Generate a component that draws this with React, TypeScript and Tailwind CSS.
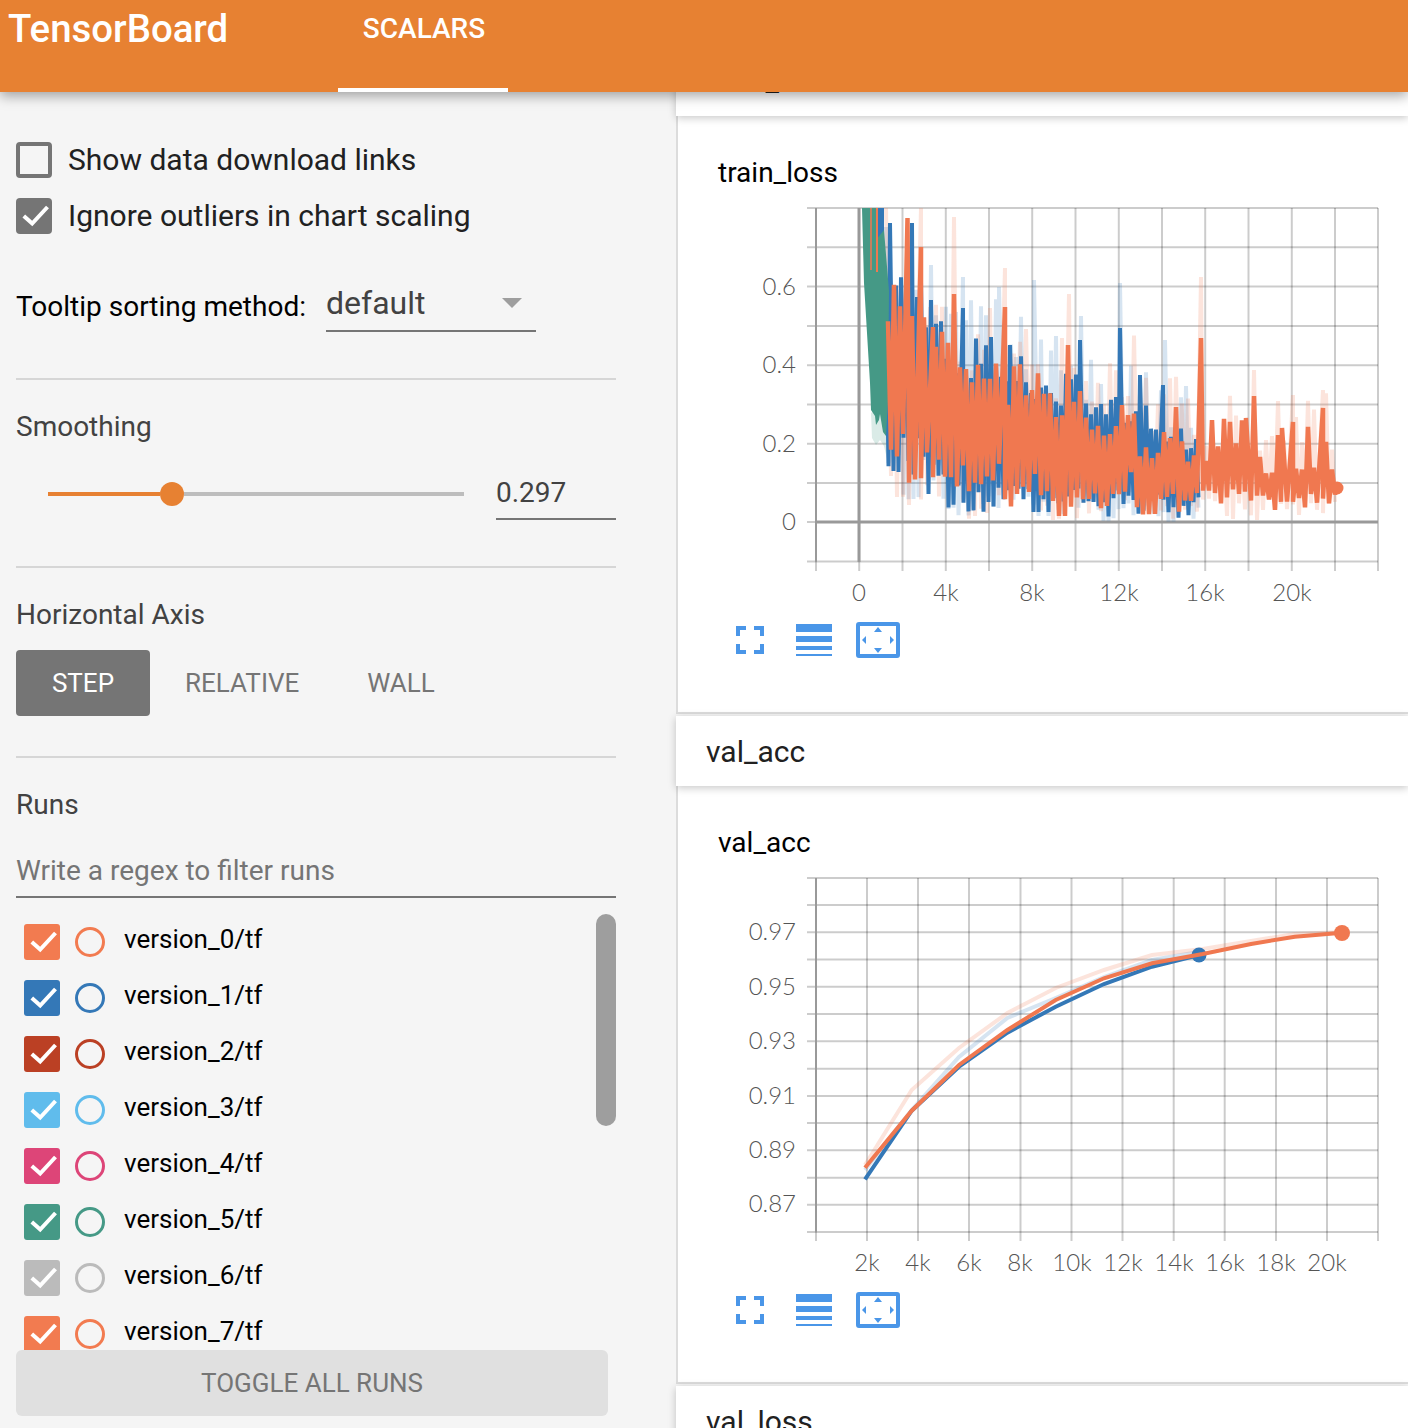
import React from 'react';

type Key = [number, number];
type Pt = [number, number];

const rng = (seed: number) => () => {
  seed |= 0;
  seed = (seed + 0x6d2b79f5) | 0;
  let t = Math.imul(seed ^ (seed >>> 15), 1 | seed);
  t = (t + Math.imul(t ^ (t >>> 7), 61 | t)) ^ t;
  return ((t ^ (t >>> 14)) >>> 0) / 4294967296;
};

const interp = (keys: Key[], x: number) => {
  if (x <= keys[0][0]) return keys[0][1];
  for (let i = 1; i < keys.length; i++) {
    if (x <= keys[i][0]) {
      const [x0, y0] = keys[i - 1];
      const [x1, y1] = keys[i];
      return y0 + ((y1 - y0) * (x - x0)) / (x1 - x0);
    }
  }
  return keys[keys.length - 1][1];
};

interface SpikeCfg {
  seed: number;
  from: number;
  to: number;
  step: number;
  envTop: Key[];
  massTop: Key[];
  massBot: Key[];
  envBot: Key[];
  peaks: Pt[];
  sway: Key[];
}

const spikes = ({ seed, from, to, step, envTop, massTop, massBot, envBot, peaks, sway }: SpikeCfg) => {
  const r = rng(seed);
  // slow wander so the mass moves in bumps rather than a regular comb
  const knots: Key[] = [];
  for (let x = from - 20; x < to + 40; x += 14 + r() * 16) knots.push([x, r() * 2 - 1]);
  const pts: Pt[] = [];
  for (let x = from; x < to; x += step) {
    const s = interp(knots, x) * interp(sway, x);
    const up = interp(massTop, x) + s + (interp(envTop, x) - interp(massTop, x)) * Math.pow(r(), 1.7);
    const down = Math.min(interp(massBot, x) + s * 0.8 + (interp(envBot, x) - interp(massBot, x)) * Math.pow(r(), 1.4), interp(envBot, x));
    pts.push([x, up], [x + step / 2, down]);
  }
  peaks.forEach(([px, py]) => {
    let best = 0;
    let bestD = 1e9;
    for (let i = 0; i < pts.length; i += 2) {
      const d = Math.abs(pts[i][0] - px);
      if (d < bestD) {
        bestD = d;
        best = i;
      }
    }
    pts[best] = [px, py];
  });
  return pts;
};

const toStr = (pts: Pt[]) => pts.map(([x, y]) => `${x.toFixed(1)},${y.toFixed(1)}`).join(' ');

const orangeCfg: SpikeCfg = {
  seed: 17,
  from: 888,
  to: 1334,
  step: 6,
  sway: [[888, 38], [1100, 34], [1200, 12], [1336, 8]],
  envTop: [[888, 240], [900, 330], [930, 335], [960, 340], [1000, 350], [1040, 360], [1080, 370], [1120, 395], [1160, 400], [1200, 415], [1260, 420], [1336, 435]],
  massTop: [[888, 330], [950, 375], [1000, 400], [1050, 410], [1100, 430], [1150, 450], [1200, 470], [1336, 476]],
  massBot: [[888, 450], [950, 465], [1000, 475], [1100, 490], [1200, 495], [1336, 498]],
  envBot: [[888, 470], [900, 512], [950, 512], [1000, 516], [1100, 516], [1200, 512], [1250, 519], [1336, 515]],
  peaks: [[907.5, 218], [921, 247], [933, 327], [954, 294], [1005, 307], [1068, 345], [1201, 338], [1254, 396], [1246, 418], [1282, 428], [1293, 422], [1323, 408], [1212, 420]],
};

const orange = spikes(orangeCfg).concat([[1337, 488]]);
const orangeRaw = spikes({
  ...orangeCfg,
  seed: 91,
  envTop: orangeCfg.envTop.map(([x, y]) => [x, y - 45] as Key),
  massTop: orangeCfg.massTop.map(([x, y]) => [x, y - 25] as Key),
  envBot: orangeCfg.envBot.map(([x, y]) => [x, Math.min(y + 6, 520)] as Key),
  peaks: [[886, 208], [921, 208], [954, 217], [1005, 268], [1069, 294], [1201, 277], [1254, 370], [1323, 390], [1293, 395]],
});
const blueCfg: SpikeCfg = {
  seed: 5,
  from: 886,
  to: 1200,
  step: 5,
  sway: [[886, 25], [1200, 15]],
  envTop: [[886, 230], [930, 305], [960, 320], [1000, 325], [1040, 360], [1080, 370], [1120, 395], [1160, 400], [1200, 440]],
  massTop: [[886, 320], [950, 355], [1000, 375], [1100, 415], [1200, 455]],
  massBot: [[886, 440], [950, 470], [1000, 480], [1100, 495], [1200, 500]],
  envBot: [[886, 480], [899, 503], [940, 511], [1000, 512], [1050, 512], [1100, 517], [1200, 518]],
  peaks: [[890, 223], [912, 223], [917, 297], [931, 300], [963, 308], [1010, 345], [1080, 340], [1120, 328], [1140, 375], [1163, 385]],
};
const blue = spikes(blueCfg);
const blueRaw = spikes({
  ...blueCfg,
  seed: 33,
  envTop: blueCfg.envTop.map(([x, y]) => [x, y - 40] as Key),
  envBot: blueCfg.envBot.map(([x, y]) => [x, y + 4] as Key),
  peaks: [[931, 265], [963, 277], [999, 287], [1034, 280], [1120, 283], [1165, 340]],
});

const GREEN_BODY: Pt[] = [[862, 208], [864, 283], [867, 333], [870, 383], [871, 410], [875, 416], [876, 425], [879, 420], [880, 414], [883, 432], [886, 436], [888, 400], [889, 291], [884, 230], [876, 240], [876, 208]];
const GREEN_RAW: Pt[] = [[871, 413], [872, 438], [876, 445], [880, 440], [884, 446], [888, 463], [888, 400]];

const COLOR_ORANGE = '#f07850';
const COLOR_BLUE = '#3478b7';
const COLOR_GREEN = '#459986';

const lossX = [816, 859.2, 902.5, 945.8, 989, 1032.2, 1075.5, 1118.8, 1162, 1205.2, 1248.5, 1291.8, 1335, 1378];
const lossY = [208, 247.3, 286.6, 326, 365.2, 404.5, 443.8, 483, 522, 561.6];
const accX = [816, 867, 918, 969, 1020.5, 1071.5, 1122.5, 1173.7, 1224.7, 1276, 1327, 1378];
const accY = [878, 905, 932.3, 959.4, 986.7, 1014, 1041.3, 1068.7, 1096, 1123, 1150.3, 1177.7, 1204.8, 1232];

const accOrange: Pt[] = [[865, 1167.7], [911.7, 1110.7], [959, 1065], [1007.4, 1030], [1055.7, 1000], [1104, 978.3], [1152, 963.3], [1202.7, 954], [1251, 944], [1294.8, 936.7], [1342, 932.7]];
const accBlue: Pt[] = [[865, 1179.3], [911.7, 1110.7], [959, 1066.7], [1007.4, 1032.7], [1055.7, 1006.7], [1104, 984], [1152, 966.7], [1199, 955]];
const accOrangeRaw: Pt[] = [[865, 1165], [911.7, 1090], [959, 1048], [1007.4, 1013], [1055.7, 988], [1104, 970], [1152, 955], [1202.7, 949], [1251, 941], [1294.8, 934], [1342, 932]];
const accBlueRaw: Pt[] = [[865, 1170], [911.7, 1110], [959, 1057], [1007.4, 1018], [1055.7, 998], [1104, 977], [1152, 960], [1199, 952]];

const Grid = ({ xs, ys, top, bottom, left, right }: { xs: number[]; ys: number[]; top: number; bottom: number; left: number; right: number }) => (
  <g stroke="#000" strokeOpacity="0.2" strokeWidth="2">
    {xs.map((x) => (
      <line key={x} x1={x} x2={x} y1={top} y2={bottom} />
    ))}
    {ys.map((y) => (
      <line key={y} x1={left} x2={right} y1={y} y2={y} />
    ))}
  </g>
);

const TickLabel = ({ x, y, anchor, children }: { x: number; y: number; anchor: 'end' | 'middle'; children: string }) => (
  <text x={x} y={y} textAnchor={anchor} fontSize="24" fontWeight="300" fill="#555" fontFamily="Lato, sans-serif">
    {children}
  </text>
);

const LossChart = () => (
  <svg viewBox="740 200 668 410" className="block w-[668px] h-[410px] ml-[62px]">
    <Grid xs={lossX} ys={lossY} top={208} bottom={571} left={807} right={1378} />
    <line x1="816" x2="816" y1="208" y2="562" stroke="#999" strokeWidth="2" />
    <line x1="859" x2="859" y1="208" y2="562" stroke="#999" strokeWidth="3" />
    <line x1="816" x2="1378" y1="522" y2="522" stroke="#999" strokeWidth="3" />
    <polyline points={toStr(blueRaw)} fill="none" stroke={COLOR_BLUE} strokeOpacity="0.2" strokeWidth="4" strokeLinejoin="bevel" />
    <polyline points={toStr(orangeRaw)} fill="none" stroke={COLOR_ORANGE} strokeOpacity="0.2" strokeWidth="4" strokeLinejoin="bevel" />
    <polygon points={toStr(GREEN_RAW)} fill={COLOR_GREEN} fillOpacity="0.2" />
    <polyline points={toStr(blue)} fill="none" stroke={COLOR_BLUE} strokeWidth="4" strokeLinejoin="bevel" />
    <line x1="880" x2="880" y1="208" y2="238" stroke={COLOR_BLUE} strokeWidth="8" />
    <polygon points={toStr(GREEN_BODY)} fill={COLOR_GREEN} />
    <line x1="871" x2="871" y1="208" y2="270" stroke={COLOR_ORANGE} strokeWidth="1.5" />
    <line x1="877" x2="877" y1="208" y2="272" stroke={COLOR_ORANGE} strokeWidth="2" />
    <polyline points={toStr(orange)} fill="none" stroke={COLOR_ORANGE} strokeWidth="4.5" strokeLinejoin="bevel" />
    <circle cx="1337" cy="488" r="6.5" fill={COLOR_ORANGE} />
    {[['0.6', 295], ['0.4', 373], ['0.2', 452], ['0', 530]].map(([t, y]) => (
      <TickLabel key={t} x={796} y={y as number} anchor="end">{t as string}</TickLabel>
    ))}
    {[['0', 859], ['4k', 946], ['8k', 1032], ['12k', 1119], ['16k', 1205], ['20k', 1292]].map(([t, x]) => (
      <TickLabel key={t} x={x as number} y={601} anchor="middle">{t as string}</TickLabel>
    ))}
  </svg>
);

const AccChart = () => (
  <svg viewBox="740 870 668 410" className="block w-[668px] h-[410px] ml-[62px]">
    <Grid xs={accX} ys={accY} top={878} bottom={1241} left={807} right={1378} />
    <line x1="816" x2="816" y1="878" y2="1232" stroke="#999" strokeWidth="2" />
    <polyline points={toStr(accBlueRaw)} fill="none" stroke={COLOR_BLUE} strokeOpacity="0.2" strokeWidth="4" />
    <polyline points={toStr(accOrangeRaw)} fill="none" stroke={COLOR_ORANGE} strokeOpacity="0.2" strokeWidth="4" />
    <polyline points={toStr(accBlue)} fill="none" stroke={COLOR_BLUE} strokeWidth="4" />
    <circle cx="1199" cy="955" r="7.5" fill={COLOR_BLUE} />
    <polyline points={toStr(accOrange)} fill="none" stroke={COLOR_ORANGE} strokeWidth="4" />
    <circle cx="1342" cy="933" r="8" fill={COLOR_ORANGE} />
    {[['0.97', 940], ['0.95', 995], ['0.93', 1049], ['0.91', 1104], ['0.89', 1158], ['0.87', 1212]].map(([t, y]) => (
      <TickLabel key={t} x={796} y={y as number} anchor="end">{t as string}</TickLabel>
    ))}
    {[['2k', 867], ['4k', 918], ['6k', 969], ['8k', 1020], ['10k', 1072], ['12k', 1123], ['14k', 1174], ['16k', 1225], ['18k', 1276], ['20k', 1327]].map(([t, x]) => (
      <TickLabel key={t} x={x as number} y={1271} anchor="middle">{t as string}</TickLabel>
    ))}
  </svg>
);

const ChartActions = () => (
  <div className="flex items-center h-[36px] mt-[12px] ml-[58px]">
    <svg viewBox="0 0 28 28" className="w-[28px] h-[28px]" fill="#4a96e8">
      <path d="M0 0h10v4H4v6H0zM18 0h10v10h-4V4h-6zM0 18h4v6h6v4H0zM24 18h4v10H18v-4h6z" />
    </svg>
    <svg viewBox="0 0 36 32" className="w-[36px] h-[32px] ml-8" fill="#4a96e8">
      <path d="M0 0h36v8H0zM0 12h36v6H0zM0 22h36v4H0zM0 30h36v2H0z" />
    </svg>
    <svg viewBox="0 0 44 36" className="w-[44px] h-[36px] ml-6" fill="#4a96e8">
      <path fillRule="evenodd" d="M3 0h38a3 3 0 0 1 3 3v30a3 3 0 0 1-3 3H3a3 3 0 0 1-3-3V3a3 3 0 0 1 3-3zM4 4v28h36V4z" />
      <path d="M22 5l4 5h-8zM22 31l-4-5h8zM6 18l4-4v8zM38 18l-4 4v-8z" />
    </svg>
  </div>
);

const SectionHeader = ({ title, className = '' }: { title: string; className?: string }) => (
  <div className={`h-[70px] shrink-0 bg-white flex items-center pl-[30px] text-[30px] text-[#212121] shadow-[0_2px_8px_rgba(0,0,0,0.22)] relative ${className}`}>
    {title}
  </div>
);

const ChartCard = ({ title, children }: { title: string; children: React.ReactNode }) => (
  <div className="h-[598px] shrink-0 bg-white border-l-2 border-b-2 border-[#dcdcdc] pt-[37px] mb-[2px]">
    <div className="h-[40px] pl-[40px] flex items-center text-[28px] text-black">{title}</div>
    <div className="mt-[7px]">{children}</div>
    <ChartActions />
  </div>
);

const Check = () => (
  <svg viewBox="0 0 36 36" className="w-[36px] h-[36px]" fill="none" stroke="#fff" strokeWidth="4">
    <polyline points="7.8,18 16.2,25.5 31.5,9" />
  </svg>
);

const runs = [
  { name: 'version_0/tf', box: 'bg-[#f27b50]', ring: 'border-[#f27b50]' },
  { name: 'version_1/tf', box: 'bg-[#3478b7]', ring: 'border-[#3478b7]' },
  { name: 'version_2/tf', box: 'bg-[#bb4024]', ring: 'border-[#bb4024]' },
  { name: 'version_3/tf', box: 'bg-[#60bcec]', ring: 'border-[#60bcec]' },
  { name: 'version_4/tf', box: 'bg-[#dd4578]', ring: 'border-[#dd4578]' },
  { name: 'version_5/tf', box: 'bg-[#459986]', ring: 'border-[#459986]' },
  { name: 'version_6/tf', box: 'bg-[#bbbbbb]', ring: 'border-[#bbbbbb]' },
  { name: 'version_7/tf', box: 'bg-[#f27b50]', ring: 'border-[#f27b50]' },
];

const Divider = ({ className }: { className: string }) => <div className={`h-[2px] w-[600px] bg-[#d6d6d6] ${className}`} />;

const Sidebar = () => (
  <aside className="w-[676px] shrink-0 h-full bg-[#f5f5f5] overflow-hidden pl-[16px] pt-[50px] text-[#212121]">
    <div className="flex items-center h-[36px] text-[30px]">
      <div className="w-[36px] h-[36px] rounded-[4px] border-[4px] border-[#757575]" />
      <span className="ml-[16px] pb-[2px]">Show data download links</span>
    </div>
    <div className="flex items-center h-[36px] mt-[20px] text-[30px]">
      <div className="w-[36px] h-[36px] rounded-[4px] bg-[#757575]">
        <Check />
      </div>
      <span className="ml-[16px] pb-[2px]">Ignore outliers in chart scaling</span>
    </div>
    <div className="flex items-center h-[56px] mt-[42px]">
      <span className="text-[28px] text-black pt-[6px] w-[310px]">Tooltip sorting method:</span>
      <div className="w-[210px] h-[56px] border-b-2 border-[#757575] flex items-center justify-between pr-[14px] text-[32px]">
        <span className="text-[#424242]">default</span>
        <svg viewBox="0 0 20 10" className="w-[20px] h-[10px]" fill="#9e9e9e">
          <polygon points="0,0 20,0 10,10" />
        </svg>
      </div>
    </div>
    <Divider className="mt-[46px]" />

    <div className="h-[40px] mt-[27px] flex items-center text-[28px] text-[#424242]">Smoothing</div>
    <div className="flex items-center h-[52px] mt-[21px]">
      <div className="flex items-center w-[416px] ml-[32px]">
        <div className="w-[112px] h-[4px] bg-[#e78132]" />
        <div className="w-[24px] h-[24px] rounded-full bg-[#e78132]" />
        <div className="w-[280px] h-[4px] bg-[#bdbdbd]" />
      </div>
      <div className="ml-[32px] w-[120px] h-[52px] border-b-2 border-[#757575] flex items-center text-[28px] text-[#424242]">0.297</div>
    </div>
    <Divider className="mt-[46px]" />

    <div className="h-[40px] mt-[27px] flex items-center text-[28px] text-[#424242]">Horizontal Axis</div>
    <div className="flex items-center h-[66px] mt-[15px] text-[26px]">
      <div className="w-[134px] h-[66px] rounded-[4px] bg-[#757575] text-white flex items-center justify-center">STEP</div>
      <span className="ml-[35px] text-[#757575]">RELATIVE</span>
      <span className="ml-[68px] text-[#757575]">WALL</span>
    </div>
    <Divider className="mt-[40px]" />

    <div className="h-[40px] mt-[27px] flex items-center text-[28px] text-[#424242]">Runs</div>
    <div className="w-[600px] h-[52px] mt-[21px] border-b-2 border-[#757575] flex items-center text-[28px] text-[#757575]">
      Write a regex to filter runs
    </div>
    <div className="relative w-[600px] h-[436px] mt-[16px] overflow-hidden">
      {runs.map((run) => (
        <div key={run.name} className="flex items-center h-[56px] pl-[8px]">
          <div className={`w-[36px] h-[36px] rounded-[3px] ${run.box}`}>
            <Check />
          </div>
          <div className={`w-[30px] h-[30px] ml-[15px] rounded-full border-[3px] ${run.ring}`} />
          <span className="ml-[19px] pb-[6px] text-[26px] text-black">{run.name}</span>
        </div>
      ))}
      <div className="absolute right-0 top-0 w-[20px] h-[212px] rounded-[10px] bg-[#9e9e9e]" />
    </div>
    <div className="w-[592px] h-[66px] rounded-[6px] bg-[#e0e0e0] text-[#757575] text-[26px] flex items-center justify-center">
      TOGGLE ALL RUNS
    </div>
  </aside>
);

const App: React.FC = () => {
  return (
    <div className="w-[1408px] h-[1428px] overflow-hidden flex flex-col font-[Roboto,sans-serif] bg-[#f5f5f5]">
      <header className="relative z-10 h-[92px] shrink-0 bg-[#e78132] shadow-[0_4px_12px_rgba(0,0,0,0.35)] text-white flex items-start">
        <div className="ml-[8px] w-[330px] h-[58px] flex items-center text-[38.4px] font-medium">TensorBoard</div>
        <div className="w-[170px] h-[92px] border-b-4 border-white text-[28px] font-medium text-center pt-[8px] pl-[2px]">SCALARS</div>
      </header>
      <div className="flex flex-1 min-h-0">
        <Sidebar />
        <main className="flex-1 min-w-0 -mt-[46px] flex flex-col">
          <SectionHeader title="train_loss" className="pb-[1px]" />
          <ChartCard title="train_loss">
            <LossChart />
          </ChartCard>
          <SectionHeader title="val_acc" />
          <ChartCard title="val_acc">
            <AccChart />
          </ChartCard>
          <SectionHeader title="val_loss" />
        </main>
      </div>
    </div>
  );
};

export default App;
